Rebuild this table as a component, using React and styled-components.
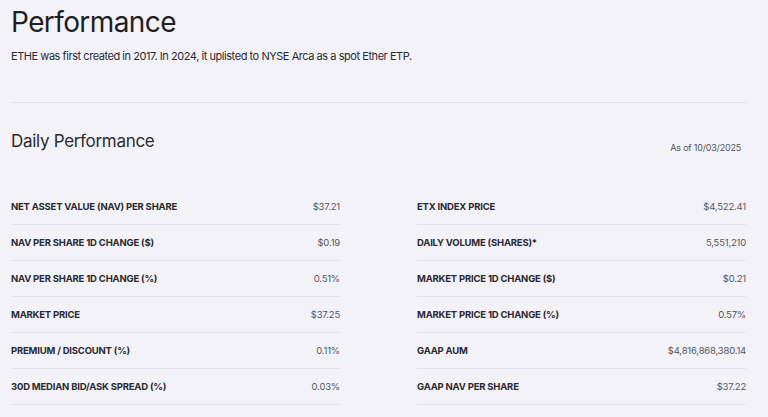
import React from "react";
import styled, { createGlobalStyle } from "styled-components";

const Global = createGlobalStyle`
  html, body { margin: 0; padding: 0; background: #f3f2f9; }
  body { font-family: Inter, "Noto Sans", sans-serif; color: #1e1e24; }
`;

const Page = styled.div`
  padding: 4px 22px 0 11px;
  background: #f3f2f9;
  height: 417px;
  box-sizing: border-box;
  overflow: hidden;
`;

const Title = styled.h1`
  margin: 0;
  font-size: 28px;
  font-weight: 400;
  letter-spacing: -0.6px;
  line-height: 36px;
  color: #1e1e24;
`;

const Lead = styled.p`
  margin: 9px 0 0;
  font-size: 11px;
  line-height: 14px;
  letter-spacing: -0.45px;
  color: #2a2a30;
`;

const Rule = styled.hr`
  margin: 39px 0 0;
  border: 0;
  border-top: 1px solid #e2e1ea;
`;

const SectionHead = styled.div`
  display: flex;
  justify-content: space-between;
  align-items: flex-start;
  margin-top: 27px;
`;

const SectionTitle = styled.h2`
  margin: 0;
  font-size: 17px;
  font-weight: 400;
  line-height: 22px;
  letter-spacing: -0.3px;
  color: #2a2a30;
`;

const AsOf = styled.span`
  margin-top: 12px;
  margin-right: 5px;
  font-size: 9px;
  letter-spacing: -0.2px;
  color: #55555c;
`;

const Grid = styled.div`
  display: grid;
  grid-template-columns: 329px 329px;
  column-gap: 77px;
  margin-top: 36px;
`;

const Column = styled.div`
  display: flex;
  flex-direction: column;
`;

const Row = styled.div`
  display: flex;
  justify-content: space-between;
  align-items: center;
  height: 36px;
  border-bottom: 1px solid #e4e3ec;
  box-sizing: border-box;
`;

const Label = styled.span`
  font-size: 9.5px;
  font-weight: 700;
  letter-spacing: -0.2px;
  color: #2a2a30;
  text-transform: uppercase;
`;

const Value = styled.span`
  font-size: 9.5px;
  letter-spacing: -0.2px;
  color: #55555c;
`;

const left = [
  ["Net Asset Value (NAV) Per Share", "$37.21"],
  ["NAV Per Share 1D Change ($)", "$0.19"],
  ["NAV Per Share 1D Change (%)", "0.51%"],
  ["Market Price", "$37.25"],
  ["Premium / Discount (%)", "0.11%"],
  ["30D Median Bid/Ask Spread (%)", "0.03%"],
];

const right = [
  ["ETX Index Price", "$4,522.41"],
  ["Daily Volume (Shares)*", "5,551,210"],
  ["Market Price 1D Change ($)", "$0.21"],
  ["Market Price 1D Change (%)", "0.57%"],
  ["GAAP AUM", "$4,816,868,380.14"],
  ["GAAP NAV Per Share", "$37.22"],
];

const Col = ({ rows }) => (
  <Column>
    {rows.map(([l, v]) => (
      <Row key={l}>
        <Label>{l}</Label>
        <Value>{v}</Value>
      </Row>
    ))}
  </Column>
);

export default function App() {
  return (
    <>
      <Global />
      <Page>
        <Title>Performance</Title>
        <Lead>ETHE was first created in 2017. In 2024, it uplisted to NYSE Arca as a spot Ether ETP.</Lead>
        <Rule />
        <SectionHead>
          <SectionTitle>Daily Performance</SectionTitle>
          <AsOf>As of 10/03/2025</AsOf>
        </SectionHead>
        <Grid>
          <Col rows={left} />
          <Col rows={right} />
        </Grid>
      </Page>
    </>
  );
}
